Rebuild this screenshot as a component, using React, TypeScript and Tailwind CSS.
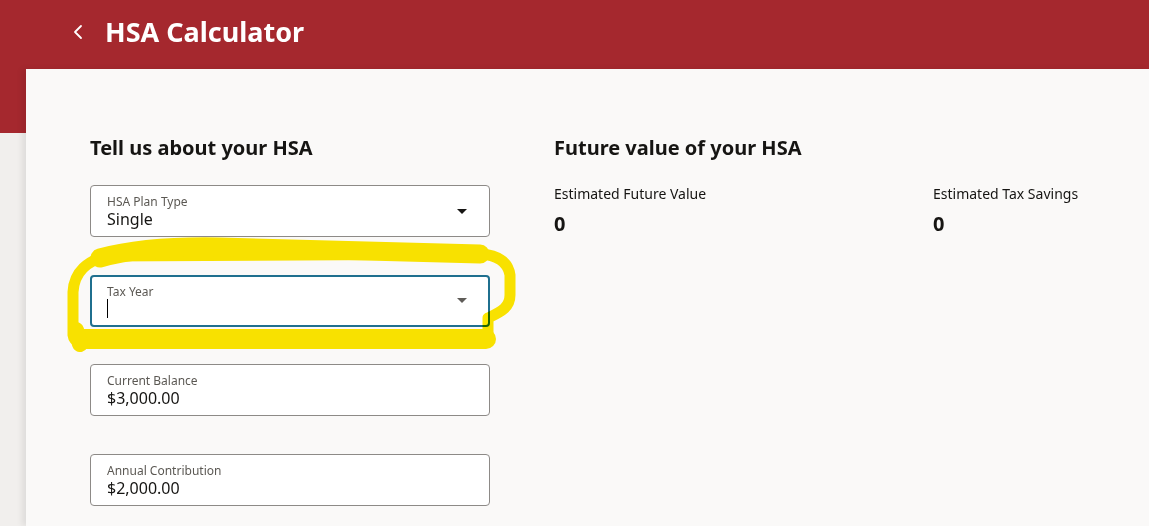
import { ChevronLeft } from 'lucide-react'

const font = { fontFamily: '"Noto Sans", "Open Sans", sans-serif' }

const Caret: React.FC<{ className?: string }> = ({ className }) => (
  <svg width="10" height="5" viewBox="0 0 10 5" className={className}>
    <path d="M0 0h10L5 5z" fill="currentColor" />
  </svg>
)

type FieldProps = {
  label: string
  value?: string
  select?: boolean
  focused?: boolean
}

const Field: React.FC<FieldProps> = ({ label, value, select, focused }) => (
  <div
    className={
      focused
        ? 'flex items-center h-[52px] bg-white rounded border-2 border-[#1f6f8e] pl-[15px] pr-[21px]'
        : 'flex items-center h-[52px] bg-white rounded border border-[#8d8a87] pl-[16px] pr-[22px]'
    }
  >
    <div className="flex flex-col flex-1 mt-[2px]">
      <span className="text-[12px] leading-[14px] text-[#5b5853]">{label}</span>
      {value !== undefined ? (
        <span className="text-[16px] leading-[20px] text-[#161513]">{value}</span>
      ) : (
        <span className="h-[20px] flex items-center">
          <span className="block w-px h-[19px] bg-black" />
        </span>
      )}
    </div>
    {select && <Caret className={focused ? 'text-[#5f5c58]' : 'text-[#161513]'} />}
  </div>
)

export default function App() {
  return (
    <div className="relative min-h-[526px] bg-[#f1efed] overflow-hidden" style={font}>
      <div className="h-[133px] bg-[#a5282e]">
        <div className="flex items-center h-[63px] pl-[66px] text-white">
          <ChevronLeft size={24} strokeWidth={1.8} />
          <h1 className="ml-[15px] text-[27px] font-bold leading-none">HSA Calculator</h1>
        </div>
      </div>

      <div className="-mt-[64px] ml-[26px] min-h-[457px] bg-[#faf9f8] shadow-[-4px_0_6px_rgba(0,0,0,0.08)] pl-[64px] pt-[65px] flex gap-[64px]">
        <section className="w-[400px]">
          <h2 className="text-[20px] leading-[28px] font-bold text-[#161513] mb-[23px]">
            Tell us about your HSA
          </h2>
          <div className="flex flex-col gap-[37.5px]">
            <Field label="HSA Plan Type" value="Single" select />
            <Field label="Tax Year" select focused />
            <Field label="Current Balance" value="$3,000.00" />
            <Field label="Annual Contribution" value="$2,000.00" />
          </div>
        </section>

        <section className="flex-1">
          <h2 className="text-[20px] leading-[28px] font-bold text-[#161513]">
            Future value of your HSA
          </h2>
          <div className="flex mt-[22px]">
            <div className="w-[379px]">
              <div className="text-[14px] leading-[20px] text-[#161513]">Estimated Future Value</div>
              <div className="mt-[6px] text-[20px] leading-[28px] font-bold text-[#161513]">0</div>
            </div>
            <div>
              <div className="text-[14px] leading-[20px] text-[#161513]">Estimated Tax Savings</div>
              <div className="mt-[6px] text-[20px] leading-[28px] font-bold text-[#161513]">0</div>
            </div>
          </div>
        </section>
      </div>

      <svg
        className="absolute inset-0 pointer-events-none mix-blend-multiply"
        width="1149"
        height="526"
        viewBox="0 0 1149 526"
      >
        <g fill="none" stroke="#fde700" strokeLinecap="round" strokeLinejoin="round">
          <path
            d="M108 256 C88 260 74 272 73 292 L73 335 C74 342 80 343 90 342 L488 340 L488 318 C500 312 510 308 510 295 L510 275 C508 262 498 255 480 254 Z"
            strokeWidth="11"
          />
          <path d="M100 258 C130 250 170 246 220 247 L480 254" strokeWidth="19" />
          <path d="M82 339 L486 339" strokeWidth="20" />
          <path d="M76 330 L80 344" strokeWidth="16" />
        </g>
      </svg>
    </div>
  )
}
